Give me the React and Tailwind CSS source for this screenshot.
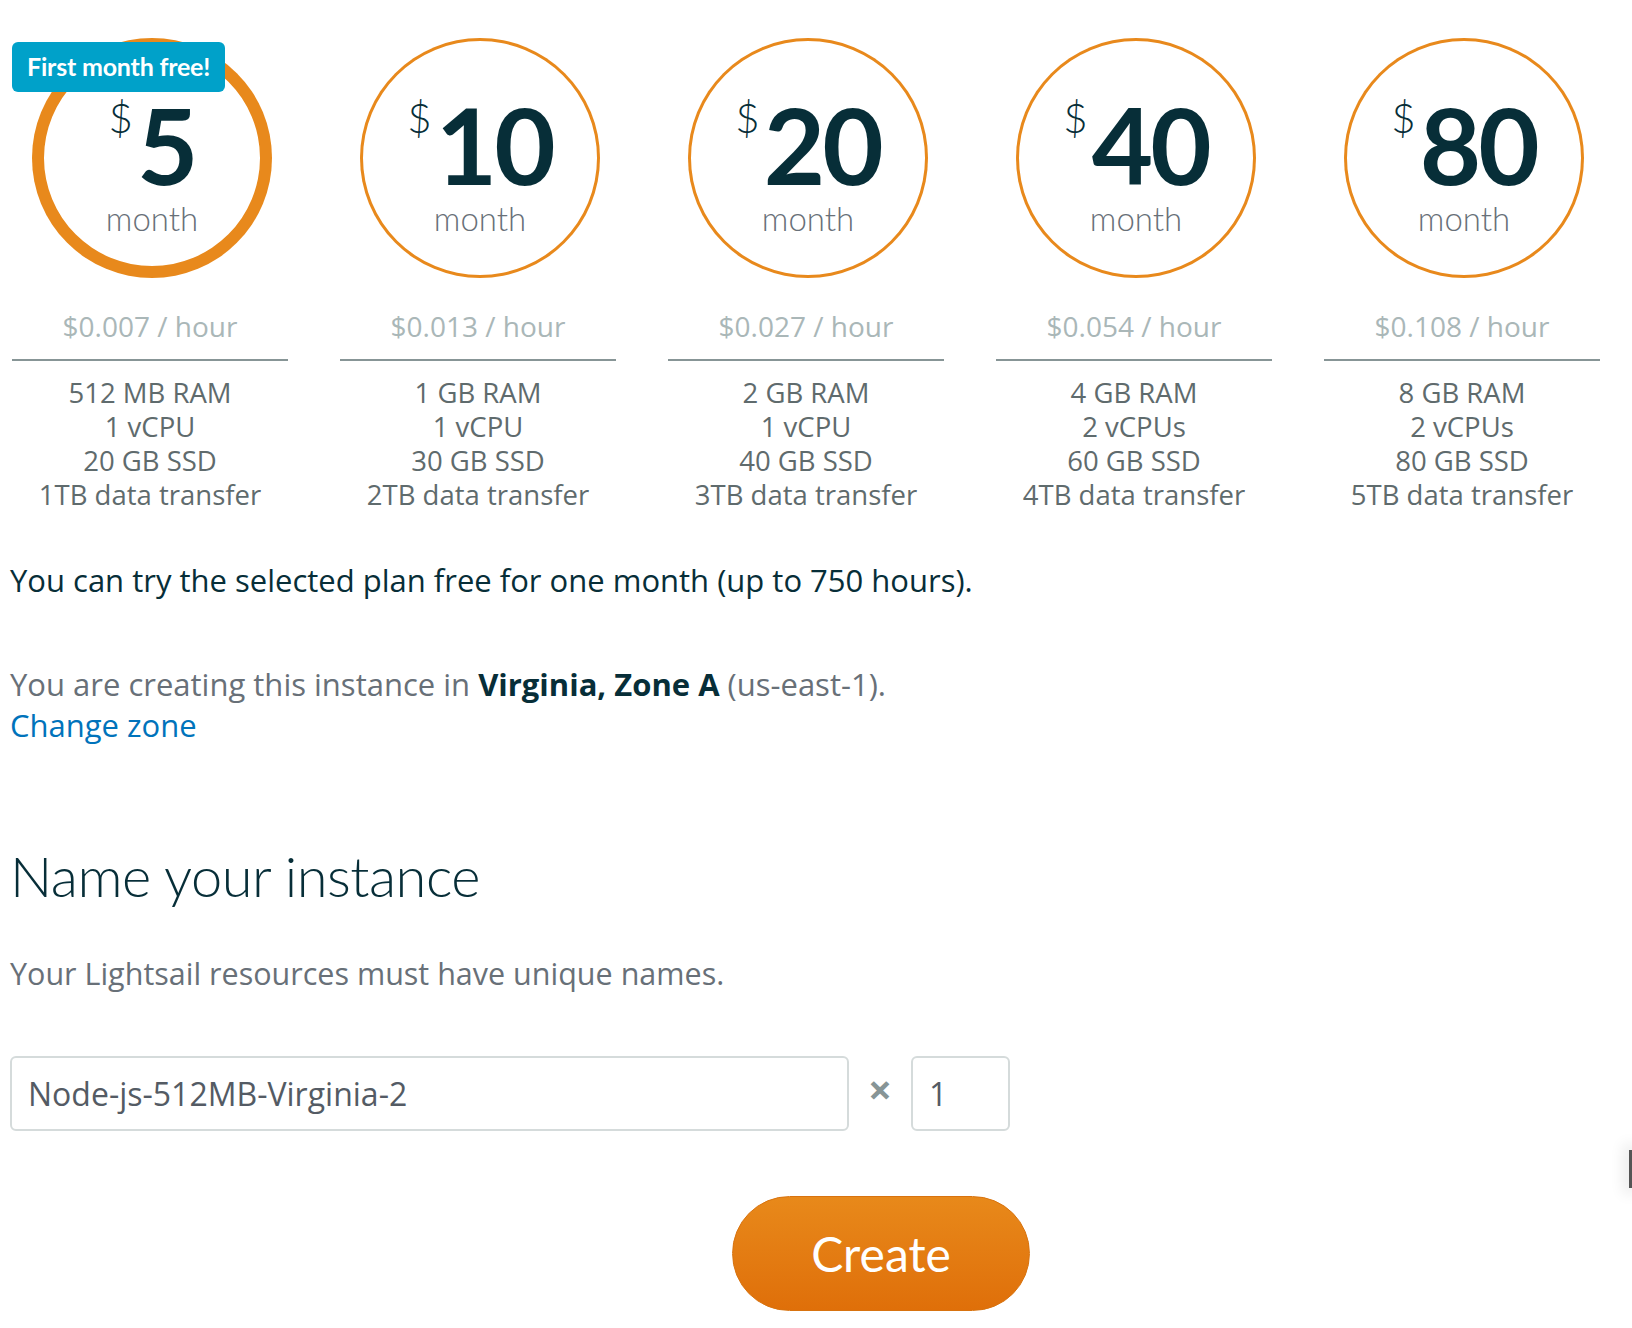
import React from 'react';

const plans = [
  { price: '5', hour: '$0.007', ram: '512 MB RAM', cpu: '1 vCPU', ssd: '20 GB SSD', transfer: '1TB data transfer', selected: true },
  { price: '10', hour: '$0.013', ram: '1 GB RAM', cpu: '1 vCPU', ssd: '30 GB SSD', transfer: '2TB data transfer' },
  { price: '20', hour: '$0.027', ram: '2 GB RAM', cpu: '1 vCPU', ssd: '40 GB SSD', transfer: '3TB data transfer' },
  { price: '40', hour: '$0.054', ram: '4 GB RAM', cpu: '2 vCPUs', ssd: '60 GB SSD', transfer: '4TB data transfer' },
  { price: '80', hour: '$0.108', ram: '8 GB RAM', cpu: '2 vCPUs', ssd: '80 GB SSD', transfer: '5TB data transfer' },
];

const lato = { fontFamily: 'Lato, "Open Sans", sans-serif' };

const PlanCard = ({ plan }) => (
  <div className="relative flex flex-col items-center">
    {/* Price circle */}
    <div
      className={`w-[240px] h-[240px] rounded-full flex flex-col items-center pt-[64px] ml-[4px] ${
        plan.selected ? 'shadow-[inset_0_0_0_12px_#e8891c]' : 'shadow-[inset_0_0_0_3px_#e8891c]'
      }`}
      style={lato}
    >
      <div className="flex items-start h-[84px]">
        <span className="text-[42px] leading-none font-light text-[#072e38] mt-[-6px] mr-[4px]">$</span>
        <span className="text-[106px] leading-[84px] font-bold text-[#072e38] tracking-[-3px]">{plan.price}</span>
      </div>
      <span className="text-[33px] leading-[36px] font-light text-[#687078] mt-[14px]">month</span>
    </div>

    {plan.selected && (
      <div className="absolute left-0 top-[4px] h-[50px] px-[15px] rounded-[6px] bg-[#00a1c9] flex items-center" style={lato}>
        <span className="text-white text-[25px] font-bold tracking-[-0.2px]">First month free!</span>
      </div>
    )}

    {/* Hourly */}
    <div className="mt-[31px] text-[28px] leading-[34px] text-[#aab7b8]">{plan.hour} / hour</div>
    <div className="w-full h-[2px] bg-[#879596] mt-[16px]" />

    {/* Specs */}
    <div className="mt-[15px] text-center text-[27.5px] leading-[34px] text-[#5f6b6d]">
      <div>{plan.ram}</div>
      <div>{plan.cpu}</div>
      <div>{plan.ssd}</div>
      <div>{plan.transfer}</div>
    </div>
  </div>
);

export default function App() {
  return (
    <div className="relative w-[1632px] h-[1328px] bg-white overflow-hidden pl-[10px] pt-[38px]" style={{ fontFamily: '"Open Sans", Lato, sans-serif' }}>
      {/* Plans */}
      <div className="ml-[2px] grid grid-cols-[repeat(5,276px)] gap-x-[52px]">
        {plans.map((p) => (
          <PlanCard key={p.price} plan={p} />
        ))}
      </div>

      <p className="mt-[48px] text-[31px] leading-[40px] text-[#072e38]">
        You can try the selected plan free for one month (up to 750 hours).
      </p>

      <div className="mt-[64px] text-[31px] leading-[41px]">
        <p className="text-[#687078]">
          You are creating this instance in <span className="font-bold text-[#072e38]">Virginia, Zone A</span> (us-east-1).
        </p>
        <a href="#" className="text-[#0073bb]">Change zone</a>
      </div>

      <h2 className="mt-[98px] text-[56px] leading-[64px] font-light text-[#072e38] tracking-[-0.5px]" style={lato}>Name your instance</h2>

      <p className="mt-[45px] text-[30.5px] leading-[40px] text-[#687078]">Your Lightsail resources must have unique names.</p>

      {/* Name inputs */}
      <div className="mt-[63px] flex items-center">
        <div className="w-[839px] h-[75px] border-2 border-[#d5dbdb] rounded-[6px] flex items-center px-[16px]">
          <span className="text-[32px] text-[#545b64]">Node-js-512MB-Virginia-2</span>
        </div>
        <span className="w-[62px] text-center text-[42px] leading-none font-bold text-[#879596] mb-[10px]">×</span>
        <div className="w-[99px] h-[75px] border-2 border-[#d5dbdb] rounded-[6px] flex items-center px-[16px]">
          <span className="text-[32px] text-[#545b64]">1</span>
        </div>
      </div>

      <button className="mt-[65px] ml-[722px] w-[298px] h-[115px] rounded-full bg-gradient-to-b from-[#e8891a] to-[#df6f09] border border-[#d8730f] text-white text-[48px] font-normal flex items-center justify-center" style={lato}>
        Create
      </button>

      {/* scrollbar sliver at right edge */}
      <div className="absolute right-0 top-[1150px] w-[3px] h-[38px] bg-[#555] shadow-[0_0_14px_6px_rgba(0,0,0,0.08)]" />
    </div>
  );
}
